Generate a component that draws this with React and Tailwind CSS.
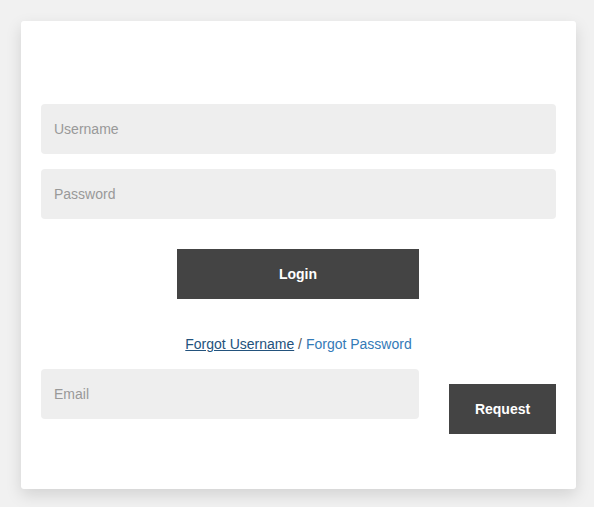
import React from 'react';

const inputCls =
  'w-full h-[50px] rounded-[4px] bg-[#eeeeee] px-[13px] text-[14px] text-[#333] placeholder:text-[#999] outline-none';

export default function App() {
  return (
    <div className="min-h-[507px] bg-[#f1f1f1] pt-[21px] px-[21px] font-['Liberation_Sans',Arial,sans-serif]">
      <div className="w-[555px] h-[468px] bg-white rounded-[3px] shadow-[0_6px_16px_rgba(0,0,0,0.13)] px-[20px] pt-[83px]">
        {/* login */}
        <div className="flex flex-col gap-[15px]">
          <input className={inputCls} placeholder="Username" />
          <input className={inputCls} type="password" placeholder="Password" />
        </div>
        <div className="flex mt-[30px] pl-[136px]">
          <button className="w-[242px] h-[50px] bg-[#444444] text-white font-bold text-[14px]">
            Login
          </button>
        </div>

        {/* forgot */}
        <div className="text-center text-[14px] mt-[37px] leading-[16px] text-[#555]">
          <a href="#" className="underline text-[#23527c]">Forgot Username</a>
          {' / '}
          <a href="#" className="text-[#337ab7]">Forgot Password</a>
        </div>
        <div className="flex items-start mt-[17px]">
          <input className={inputCls + ' !w-[378px]'} placeholder="Email" />
          <button className="ml-[30px] mt-[15px] w-[107px] h-[50px] bg-[#444444] text-white font-bold text-[14px]">
            Request
          </button>
        </div>
      </div>
    </div>
  );
}
